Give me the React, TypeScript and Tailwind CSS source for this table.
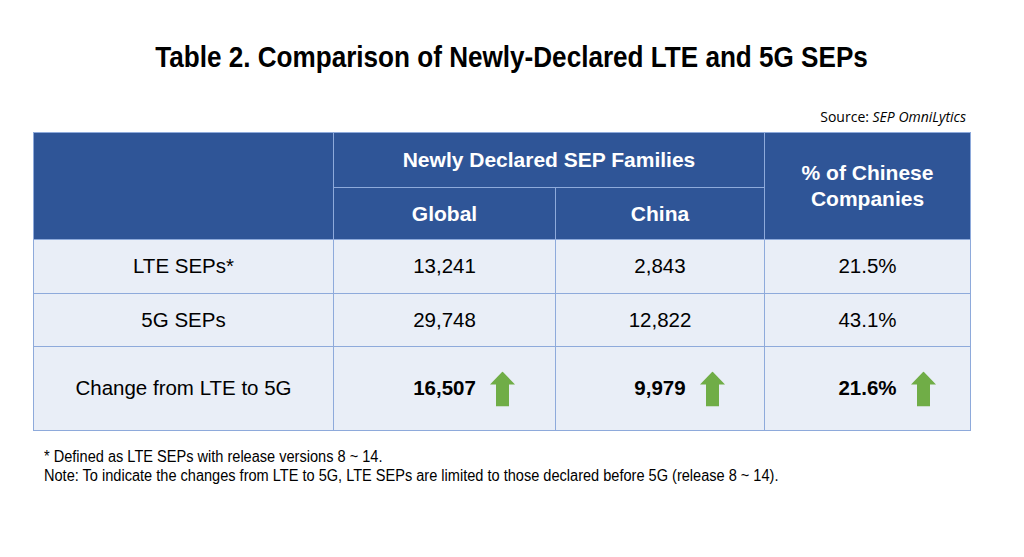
import React from 'react';

const arial = { fontFamily: '"Liberation Sans", Arial, sans-serif' };

function UpArrow() {
    return (
        <svg width="25" height="35" viewBox="0 0 25 35" className="absolute left-full top-1/2 -translate-y-1/2 ml-[14px]">
            <polygon points="12.5,0 25,13 19,13 19,35 6,35 6,13 0,13" fill="#70AD47" />
        </svg>
    );
}

function Change({ value }: { value: string }) {
    return (
        <span className="relative inline-block font-bold">
            {value}
            <UpArrow />
        </span>
    );
}

const head = 'bg-[#2F5597] text-white font-bold text-[21px] border border-[#8EAADB] text-center align-middle';
const cell = 'bg-[#E9EEF7] text-[20.5px] text-black border border-[#8EAADB] text-center align-middle';

export default function App() {
    return (
        <div className="w-[1024px] h-[557px] bg-white overflow-hidden" style={arial}>
            <div className="pt-[40px] text-center">
                <h1 className="inline-block scale-x-[0.87] text-[30px] font-bold text-black leading-[34px]">
                    Table 2. Comparison of Newly-Declared LTE and 5G SEPs
                </h1>
            </div>
            <div className="mt-[35px] pr-[58px] text-right text-[14px] leading-[16px] text-black" style={{ fontFamily: '"Open Sans", sans-serif' }}>
                Source: <i>SEP OmniLytics</i>
            </div>
            <table className="ml-[33px] mt-[7px] border-collapse table-fixed w-[937px]">
                <colgroup>
                    <col className="w-[300px]" />
                    <col className="w-[222px]" />
                    <col className="w-[209px]" />
                    <col className="w-[206px]" />
                </colgroup>
                <thead>
                    <tr className="h-[55px]">
                        <th rowSpan={2} className={head}></th>
                        <th colSpan={2} className={head}>Newly Declared SEP Families</th>
                        <th rowSpan={2} className={`${head} leading-[26px]`}>% of Chinese<br />Companies</th>
                    </tr>
                    <tr className="h-[52px]">
                        <th className={head}>Global</th>
                        <th className={head}>China</th>
                    </tr>
                </thead>
                <tbody>
                    <tr className="h-[54px]">
                        <td className={cell}>LTE SEPs*</td>
                        <td className={cell}>13,241</td>
                        <td className={cell}>2,843</td>
                        <td className={cell}>21.5%</td>
                    </tr>
                    <tr className="h-[53px]">
                        <td className={cell}>5G SEPs</td>
                        <td className={cell}>29,748</td>
                        <td className={cell}>12,822</td>
                        <td className={cell}>43.1%</td>
                    </tr>
                    <tr className="h-[84px]">
                        <td className={cell}>Change from LTE to 5G</td>
                        <td className={cell}><Change value="16,507" /></td>
                        <td className={cell}><Change value="9,979" /></td>
                        <td className={cell}><Change value="21.6%" /></td>
                    </tr>
                </tbody>
            </table>
            <div className="ml-[44px] mt-[16px] origin-left scale-x-[0.91] text-[16px] leading-[19px] text-black whitespace-nowrap">
                <p>* Defined as LTE SEPs with release versions 8 ~ 14.</p>
                <p>Note: To indicate the changes from LTE to 5G, LTE SEPs are limited to those declared before 5G (release 8 ~ 14).</p>
            </div>
        </div>
    );
}
